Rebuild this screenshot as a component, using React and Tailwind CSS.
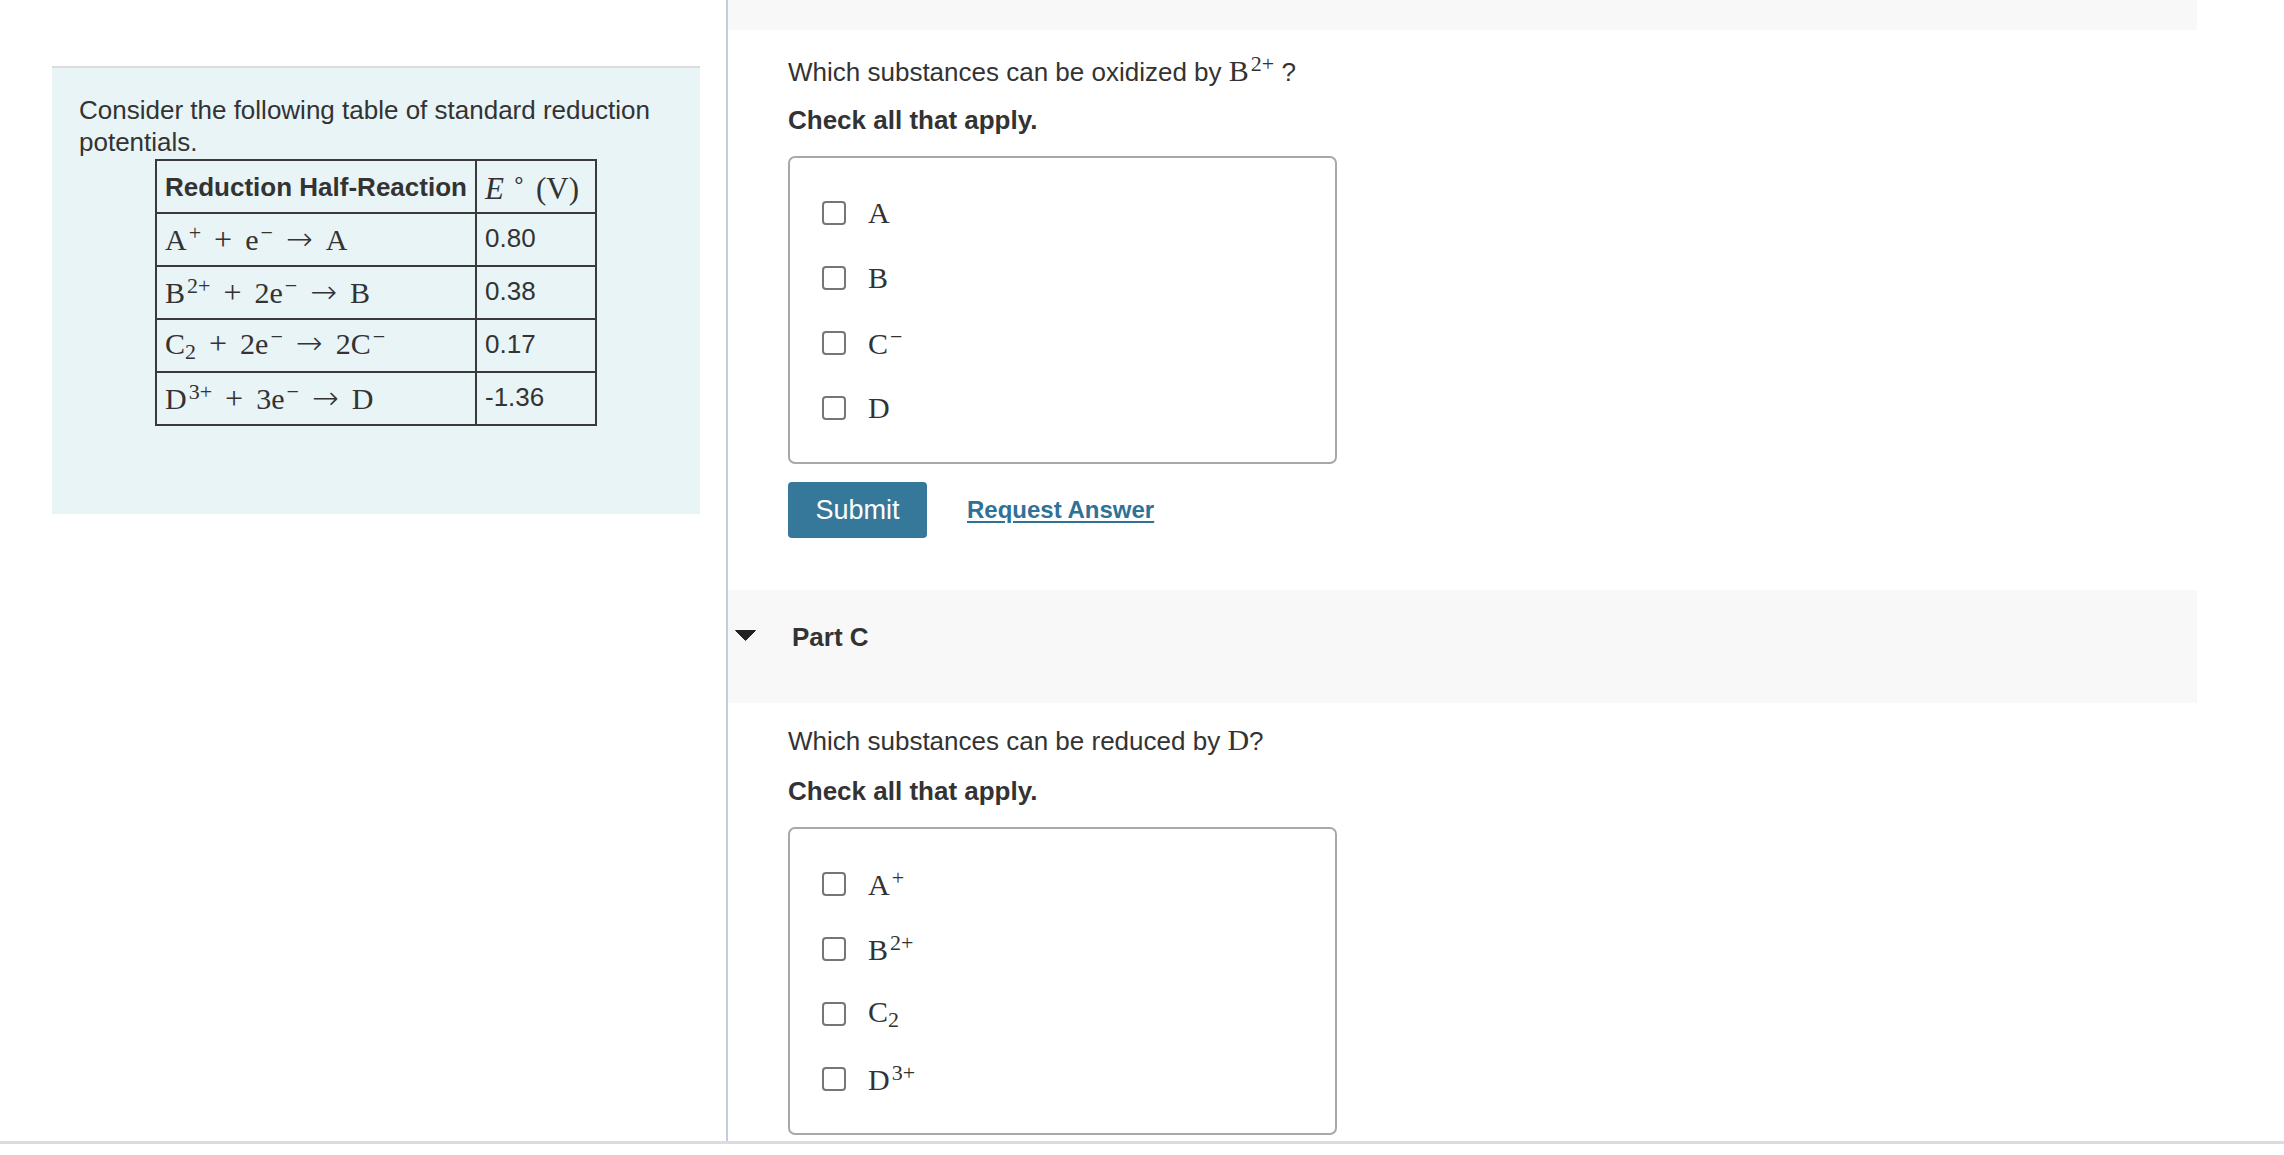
import React from "react";

const serif = "font-['Liberation_Serif','Times_New_Roman',serif]";

// little math helpers, MathJax-ish spacing
function Sup({ children }) {
    return <span className="ml-[2px] text-[22px] leading-none align-[10px]">{children}</span>;
}

function Sub({ children }) {
    return <span className="text-[22px] leading-none align-[-5px]">{children}</span>;
}

function Plus() {
    return <span className="mx-[13px] text-[32px]">+</span>;
}

function Arrow() {
    return <span className="mx-[13px] text-[32px] font-['DejaVu_Sans',sans-serif] font-extralight">→</span>;
}

const reactions = [
    {
        eq: (<>A<Sup>+</Sup><Plus />e<Sup>−</Sup><Arrow />A</>),
        e: "0.80",
    },
    {
        eq: (<>B<Sup>2+</Sup><Plus />2e<Sup>−</Sup><Arrow />B</>),
        e: "0.38",
    },
    {
        eq: (<>C<Sub>2</Sub><Plus />2e<Sup>−</Sup><Arrow />2C<Sup>−</Sup></>),
        e: "0.17",
    },
    {
        eq: (<>D<Sup>3+</Sup><Plus />3e<Sup>−</Sup><Arrow />D</>),
        e: "-1.36",
    },
];

function ReactionTable() {
    return (
        <table className="mx-auto mt-[1px] border-collapse border-2 border-[#3a3a3a]">
            <tbody>
                <tr className="h-[53px]">
                    <th className="w-[320px] border-2 border-[#3a3a3a] px-[8px] text-left font-bold leading-none">
                        Reduction Half-Reaction
                    </th>
                    <th className={`w-[120px] border-2 border-[#3a3a3a] px-[8px] text-left font-normal text-[31px] leading-none ${serif}`}>
                        <i>E</i>
                        <span className="ml-[8px] text-[22px] align-[12px]">∘</span>
                        <span className="ml-[10px]">(V)</span>
                    </th>
                </tr>
                {reactions.map((r, i) => (
                    <tr key={i} className="h-[53px]">
                        <td className={`border-2 border-[#3a3a3a] px-[8px] pb-[3px] text-[30px] leading-none whitespace-nowrap ${serif}`}>
                            {r.eq}
                        </td>
                        <td className="border-2 border-[#3a3a3a] px-[8px] pb-[3px] leading-none">{r.e}</td>
                    </tr>
                ))}
            </tbody>
        </table>
    );
}

function CheckList({ options }) {
    return (
        <div className="w-[549px] border-2 border-[#a8a8a8] rounded-[7px] py-[22px] pl-[32px]">
            {options.map((opt, i) => (
                <label key={i} className="h-[65px] flex items-center gap-[22px]">
                    <span className="w-[24px] h-[24px] border-2 border-[#767676] rounded-[4px] bg-white shrink-0" />
                    <span className={`text-[30px] leading-none ${serif}`}>{opt}</span>
                </label>
            ))}
        </div>
    );
}

function Question({ children, options, withButtons }) {
    return (
        <div>
            <div className="h-[32px] leading-[32px] whitespace-nowrap">{children}</div>
            <div className="mt-[19px] h-[32px] leading-[32px] font-bold">Check all that apply.</div>
            <div className="mt-[20px]">
                <CheckList options={options} />
            </div>
            {withButtons && (
                <div className="mt-[18px] flex items-center">
                    <button className="w-[139px] h-[56px] rounded-[4px] bg-[#36789a] text-white text-[27px]">
                        Submit
                    </button>
                    <a className="ml-[40px] text-[24px] font-bold text-[#2f7197] underline decoration-2 underline-offset-[3px] cursor-pointer">
                        Request Answer
                    </a>
                </div>
            )}
        </div>
    );
}

export default function App() {
    return (
        <div className="h-[1155px] overflow-hidden bg-white font-['Liberation_Sans',Arial,sans-serif] text-[26px] text-[#333]">
            <div className="flex h-[1144px] border-b-[3px] border-[#dcdcdc]">
                {/* problem intro */}
                <aside className="w-[726px] shrink-0 pt-[66px] pl-[52px]">
                    <div className="w-[648px] h-[448px] border-t-2 border-[#dcdcdc] bg-[#e8f4f6] pt-[26px] px-[27px]">
                        <p className="leading-[32px]">Consider the following table of standard reduction potentials.</p>
                        <ReactionTable />
                    </div>
                </aside>

                <div className="w-[2px] shrink-0 bg-[#c3cde0]" />

                <main className="w-[1469px] shrink-0">
                    <div className="h-[30px] bg-[#f8f8f8]" />

                    <section className="pl-[60px] pt-[23px]">
                        <Question
                            withButtons
                            options={[
                                "A",
                                "B",
                                (<>C<Sup>−</Sup></>),
                                "D",
                            ]}
                        >
                            Which substances can be oxidized by{" "}
                            <span className={`text-[30px] ${serif}`}>B<Sup>2+</Sup></span> ?
                        </Question>
                    </section>

                    {/* Part C header */}
                    <div className="mt-[52px] h-[113px] bg-[#f8f8f8] pt-[31px] pl-[7px]">
                        <div className="h-[32px] flex items-center">
                            <svg width="21" height="11" viewBox="0 0 21 11" className="mb-[4px]">
                                <polygon points="0.5,0.5 20.5,0.5 10.5,10.5" fill="#222" stroke="#222" strokeLinejoin="round" />
                            </svg>
                            <span className="ml-[36px] font-bold">Part C</span>
                        </div>
                    </div>

                    <section className="pl-[60px] pt-[21px]">
                        <Question
                            options={[
                                (<>A<Sup>+</Sup></>),
                                (<>B<Sup>2+</Sup></>),
                                (<>C<Sub>2</Sub></>),
                                (<>D<Sup>3+</Sup></>),
                            ]}
                        >
                            Which substances can be reduced by{" "}
                            <span className={`text-[30px] ${serif}`}>D</span>?
                        </Question>
                    </section>
                </main>
            </div>
        </div>
    );
}
